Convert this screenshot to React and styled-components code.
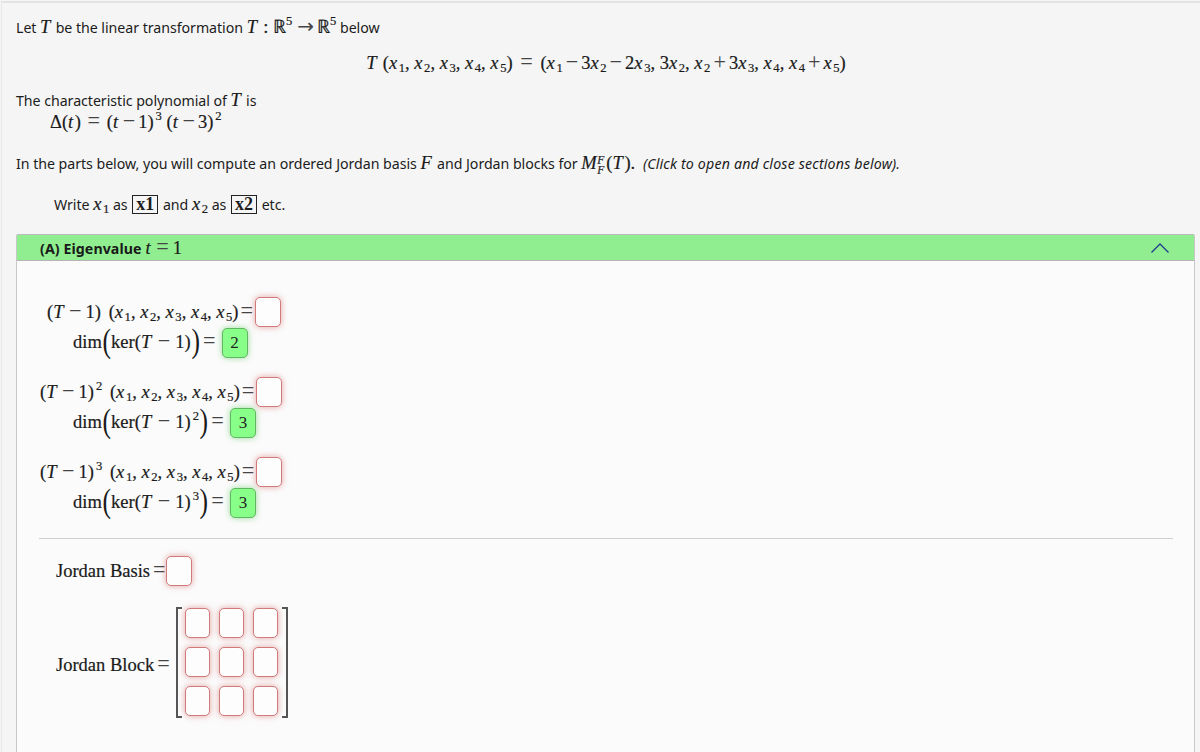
import React from "react";
import styled, { createGlobalStyle } from "styled-components";

const Global = createGlobalStyle`
  html, body { margin: 0; padding: 0; background: #f5f5f5; }
  body { font-family: "Noto Sans", "Open Sans", sans-serif; color: #1c1c1c; }
  #root { height: 752px; overflow: hidden; }
`;
const Page = styled.div`
  box-sizing: border-box;
  height: 752px;
  margin: 1px 0 0 1px;
  border-top: 2px solid #e4e4e4;
  border-left: 1px solid #e8e8e8;
  padding: 0 4px 0 14px;
  overflow: hidden;
  font-size: 14.2px;
  letter-spacing: -0.04px;
`;
const Line = styled.div`
  height: ${p => p.$h}px;
  line-height: ${p => p.$h}px;
  margin-top: ${p => p.$top || 0}px;
  padding-left: ${p => p.$left || 0}px;
  white-space: nowrap;
  text-align: ${p => p.$center ? "center" : "left"};
`;
const Em = styled.em`
  font-style: italic;
  letter-spacing: 0.17px;
  margin-left: 4px;
`;
const M = styled.span`
  font-family: "Liberation Serif", serif;
  font-size: 18.5px;
  font-weight: 400;
  letter-spacing: 0;
  color: #1a1a1a;
  -webkit-text-stroke: 0.2px #1a1a1a;
`;
const Label = styled(M)`
  margin-top: ${p => p.$drop || 0}px;
`;
const I = styled.i`
  font-style: italic;
  margin-right: 1.6px;
`;
const Sub = styled.sub`
  font-size: 0.68em;
  line-height: 0;
  vertical-align: -0.22em;
`;
const Sup = styled.sup`
  font-size: 0.68em;
  line-height: 0;
  vertical-align: 0.62em;
  margin-left: ${p => p.$left ?? 2}px;
`;
const Stacked = styled.span`
  display: inline-flex;
  flex-direction: column;
  vertical-align: middle;
  font-size: 0.62em;
  line-height: 10px;
  font-style: italic;
  margin: 0 2px 0 -1px;
`;
const Op = styled.span`
  margin: 0 ${p => p.$gap ?? 3}px;
  font-size: 1.2em;
  line-height: 0;
  color: #444;
  -webkit-text-stroke: 0;
`;
const Arrow = styled.span`
  font-family: "DejaVu Sans", sans-serif;
  font-size: 20px;
  line-height: 0;
  margin: 0 3px 0 5px;
  color: #444;
  -webkit-text-stroke: 0;
`;
const TupleGap = styled.span`
  margin-left: 3px;
`;
const Boxed = styled.span`
  display: inline-block;
  border: 1px solid #222;
  height: 17px;
  line-height: 17px;
  padding: 0 3px;
  font-family: "Liberation Serif", serif;
  font-weight: 700;
  font-size: 18px;
  letter-spacing: 0;
  vertical-align: baseline;
  margin: 0 1px;
`;
const Panel = styled.section`
  margin-top: 18px;
  margin-right: 1px;
  border: 1px solid #c8c8c8;
  border-top-color: #bbb;
  border-radius: 2px 2px 0 0;
  background: #fbfbfb;
  height: 560px;
`;
const PanelHeader = styled.header`
  display: flex;
  align-items: center;
  justify-content: space-between;
  box-sizing: border-box;
  height: 26px;
  padding: 1px 25px 0 23px;
  background: #90ee90;
  border-bottom: 1px solid #b4b4b4;
  font-weight: 700;
  font-size: 14.2px;
  letter-spacing: 0.08px;
  color: #1a1a1a;
`;
const PanelBody = styled.div`
  padding: 36px 0 0 22px;
  margin-right: 21px;
`;
const EqGroup = styled.div`
  display: flex;
  flex-direction: column;
  margin-bottom: ${p => p.$gap ?? 19}px;
`;
const EqRow = styled.div`
  display: flex;
  align-items: center;
  height: ${p => p.$h || 30}px;
  padding-left: ${p => p.$left || 0}px;
  white-space: nowrap;
`;
const Answer = styled.span`
  flex: none;
  display: flex;
  align-items: center;
  justify-content: center;
  box-sizing: border-box;
  width: ${p => p.$w || 26}px;
  height: 30px;
  margin-left: ${p => p.$ml || 0}px;
  border-radius: 5px;
  font-family: "Liberation Serif", serif;
  font-size: 17px;
  color: #222;
  background: ${p => p.$ok ? "#88ff88" : "#fdfdfd"};
  border: 1px solid ${p => p.$ok ? "#62b562" : "#d07a7a"};
  box-shadow: 0 0 6px ${p => p.$ok ? "rgba(90,200,90,.6)" : "rgba(210,90,90,.55)"};
`;
const Big = styled.span`
  font-size: 34px;
  font-weight: 400;
  -webkit-text-stroke: 0;
  line-height: 0;
  vertical-align: -4px;
  display: inline-block;
  transform: scaleX(.75);
  margin: 0 -1px;
`;
const Rule = styled.hr`
  margin: 0;
  border: 0;
  border-top: 1px solid #cfcfcf;
`;
const Labeled = styled.div`
  display: flex;
  align-items: center;
  padding-left: 17px;
  margin-top: ${p => p.$top}px;
  white-space: nowrap;
`;
const Matrix = styled.div`
  display: grid;
  grid-template-columns: repeat(3, 25px);
  grid-auto-rows: 30px;
  gap: 9px;
  padding: 1px 10px 2px 9px;
  position: relative;
  margin-left: 3px;
  &::before, &::after {
    content: "";
    position: absolute;
    top: 0;
    bottom: 0;
    width: 4px;
    border: 2px solid #555;
  }
  &::before { left: 0; border-right: 0; }
  &::after { right: 0; border-left: 0; }
`;
const Chevron = () => (
  <svg width="18" height="10" viewBox="0 0 18 10" fill="none" stroke="#1b3f8f" strokeWidth="1.3">
    <polyline points="0.5,9.5 9,1 17.5,9.5" />
  </svg>
);
const Tuple = () => (
  <>
    (<I>x</I><Sub>1</Sub>, <I>x</I><Sub>2</Sub>, <I>x</I><Sub>3</Sub>, <I>x</I><Sub>4</Sub>, <I>x</I><Sub>5</Sub>)
  </>
);
const V = ({ n }) => (<><I>x</I><Sub>{n}</Sub></>);
const Pow = ({ n }) => n ? <Sup>{n}</Sup> : null;

const Equation = ({ power, left, dimLeft, value, gap }) => (
  <EqGroup $gap={gap}>
    <EqRow $left={left}>
      <M>(<I>T</I><Op $gap={4}>−</Op>1)<Pow n={power} /> <TupleGap><Tuple /></TupleGap><Op $gap={2}>=</Op></M>
      <Answer />
    </EqRow>
    <EqRow $left={dimLeft} $h={31}>
      <M>dim<Big>(</Big>ker(<I>T</I><Op $gap={5}>−</Op>1)<Pow n={power} /><Big>)</Big><Op>=</Op></M>
      <Answer $ok $ml={3}>{value}</Answer>
    </EqRow>
  </EqGroup>
);

export default function App() {
  return (
    <Page>
      <Global />
      <Line $h={24} $top={12}>
        Let <M><I>T</I></M> be the linear transformation <M><I>T</I> : ℝ<Sup $left={0}>5</Sup><Arrow>→</Arrow>ℝ<Sup $left={0}>5</Sup></M> below
      </Line>
      <Line $h={30} $top={9} $center>
        <M><I>T</I> <Tuple /> <Op>=</Op> (<V n={1} /><Op>−</Op>3<V n={2} /><Op>−</Op>2<V n={3} />, 3<V n={2} />, <V n={2} /><Op>+</Op>3<V n={3} />, <V n={4} />, <V n={4} /><Op>+</Op><V n={5} />)</M>
      </Line>
      <Line $h={22} $top={11}>
        The characteristic polynomial of <M><I>T</I></M> is
      </Line>
      <Line $h={22} $top={0} $left={34}>
        <M>Δ(<I>t</I>) <Op $gap={2}>=</Op> (<I>t</I><Op>−</Op>1)<Pow n={3} /> (<I>t</I><Op>−</Op>3)<Pow n={2} /></M>
      </Line>
      <Line $h={26} $top={17}>
        In the parts below, you will compute an ordered Jordan basis <M><I>F</I></M> and Jordan blocks for <M><I>M</I><Stacked><span>F</span><span>F</span></Stacked>(<I>T</I>).</M> <Em>(Click to open and close sections below).</Em>
      </Line>
      <Line $h={24} $top={16} $left={38}>
        Write <M><V n={1} /></M> as <Boxed>x1</Boxed> and <M><V n={2} /></M> as <Boxed>x2</Boxed> etc.
      </Line>
      <Panel>
        <PanelHeader>
          <span>(A) Eigenvalue <M><I>t</I><Op $gap={4}>=</Op>1</M></span>
          <Chevron />
        </PanelHeader>
        <PanelBody>
          <Equation left={8} dimLeft={34} value="2" />
          <Equation power={2} left={1} dimLeft={34} value="3" />
          <Equation power={3} left={1} dimLeft={34} value="3" gap={20} />
          <Rule />
          <Labeled $top={17}>
            <M>Jordan Basis<Op $gap={3}>=</Op></M>
            <Answer $ml={-3} />
          </Labeled>
          <Labeled $top={21}>
            <Label $drop={5}>Jordan Block<Op $gap={3}>=</Op></Label>
            <Matrix>
              {Array.from({ length: 9 }, (_, i) => <Answer key={i} $w={25} />)}
            </Matrix>
          </Labeled>
        </PanelBody>
      </Panel>
    </Page>
  );
}
